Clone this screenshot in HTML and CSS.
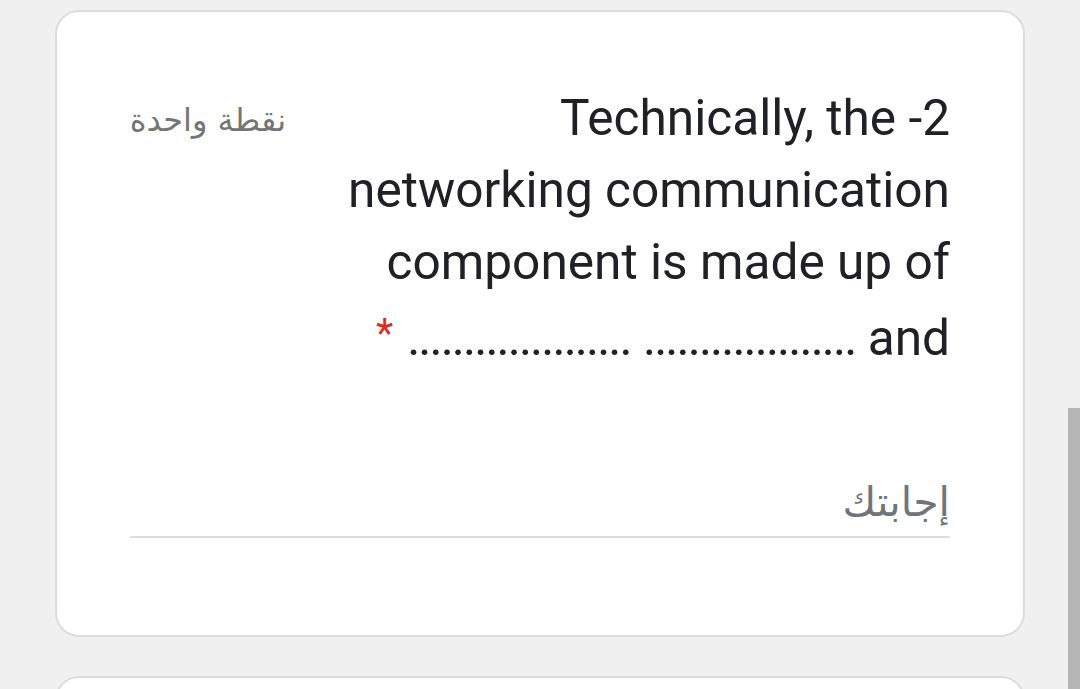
FILE: index.html
```html
<!DOCTYPE html>
<html lang="ar" dir="rtl">
<head>
<meta charset="utf-8">
<link rel="stylesheet" href="styles.css">
</head>
<body>
<div class="page">
  <section class="card">
    <div class="q-head">
      <div class="q-title">
        <span class="line">Technically, the -2</span>
        <span class="line">networking communication</span>
        <span class="line">component is made up of</span>
        <span class="line"><span class="req">*</span><span class="dots">....................</span> <span class="dots">...................</span> and</span>
      </div>
      <div class="q-points">نقطة واحدة</div>
    </div>
    <div class="answer">
      <div class="answer-input">إجابتك</div>
    </div>
  </section>
  <section class="card card-next"></section>
  <div class="scrollbar"></div>
</div>
</body>
</html>
```

FILE: styles.css
```css
html, body {
  margin: 0;
  padding: 0;
  background: #f0f0f0;
  height: 100%;
  overflow: hidden;
}
.page {
  height: 689px;
  box-sizing: border-box;
  overflow: hidden;
  padding: 10px 55px 0 55px;
  display: flex;
  flex-direction: column;
  gap: 39px;
}
.card {
  flex: none;
  background: #fff;
  border: 2px solid #dadce0;
  border-radius: 24px;
  box-sizing: border-box;
  height: 627px;
  padding: 0 73px;
}
.card-next {
  height: 60px;
}
.q-head {
  display: flex;
  flex-direction: row;
  align-items: flex-start;
  padding-top: 70px;
}
.q-title {
  flex: 1;
  direction: ltr;
  text-align: right;
  font-family: Roboto, "Open Sans", sans-serif;
  font-size: 49.6px;
  line-height: 72px;
  color: #202124;
}
.line {
  display: block;
  white-space: nowrap;
}
.dots {
  letter-spacing: -1.9px;
}
.req {
  color: #d93025;
  font-size: 40px;
  vertical-align: 8px;
  margin-right: 14px;
}
.q-points {
  flex: none;
  padding-right: 62px;
  padding-top: 18px;
  font-family: "DejaVu Sans", sans-serif;
  font-size: 32px;
  line-height: 40px;
  color: #757575;
}
.answer {
  padding-top: 103px;
}
.answer-input {
  font-family: "DejaVu Sans", sans-serif;
  font-size: 41px;
  line-height: 50px;
  color: #70757a;
  border-bottom: 2px solid #dadce0;
  padding-bottom: 9px;
}
.scrollbar {
  position: fixed;
  right: 0;
  top: 408px;
  width: 12px;
  bottom: 0;
  background: #b5b5b5;
}
```
